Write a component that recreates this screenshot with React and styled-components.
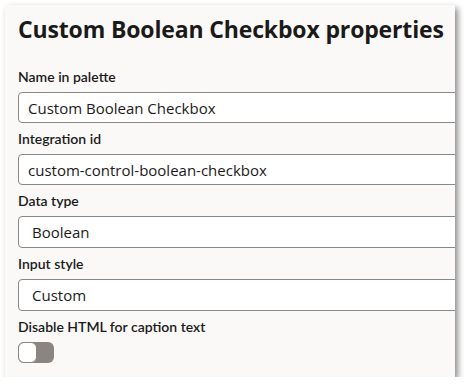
import React from "react";
import styled, { createGlobalStyle } from "styled-components";

const Global = createGlobalStyle`
  body {
    margin: 0;
    background: #ffffff;
    font-family: "Open Sans", "Noto Sans", sans-serif;
  }
`

const Panel = styled.div`
  margin: 5px 0 0 5px;
  width: 450px;
  height: 372px;
  box-sizing: border-box;
  padding: 8px 0 0 13px;
  background: #faf9f8;
  box-shadow: 3px 3px 6px rgba(0, 0, 0, 0.45);
  overflow: hidden;
`

const Title = styled.h1`
  margin: 0 0 23px;
  font-size: 23px;
  font-weight: 700;
  color: #1b1a19;
  line-height: 32px;
  letter-spacing: -0.15px;
`

const Field = styled.div`
  display: flex;
  flex-direction: column;
  margin-bottom: 7px;
`

const Label = styled.label`
  font-family: Lato, "Open Sans", sans-serif;
  font-size: 14px;
  font-weight: 600;
  color: #1b1a19;
  line-height: 18px;
  margin-bottom: 6px;
`

const Box = styled.div`
  height: ${(p) => (p.$select ? 32 : 31)}px;
  box-sizing: border-box;
  margin-right: -20px;
  border: 1px solid #8a8886;
  border-radius: 4px;
  background: #ffffff;
  display: flex;
  align-items: center;
  padding-left: ${(p) => (p.$select ? 13 : 9)}px;
  font-size: 15px;
  color: #1b1a19;
`

const Toggle = styled.div`
  width: 36px;
  height: 21px;
  box-sizing: border-box;
  border-radius: 6px;
  background: #8a8580;
  position: relative;
`

const Knob = styled.div`
  position: absolute;
  left: 0;
  top: 0;
  width: 19px;
  height: 21px;
  box-sizing: border-box;
  border: 1px solid #8a8580;
  border-radius: 6px;
  background: #ffffff;
`

const fields = [
  { label: "Name in palette", value: "Custom Boolean Checkbox" },
  { label: "Integration id", value: "custom-control-boolean-checkbox" },
  { label: "Data type", value: "Boolean", select: true },
  { label: "Input style", value: "Custom", select: true },
]

export default function App() {
  return (
    <>
      <Global />
      <Panel>
        <Title>Custom Boolean Checkbox properties</Title>
        {fields.map((f) => (
          <Field key={f.label}>
            <Label>{f.label}</Label>
            <Box $select={f.select}>{f.value}</Box>
          </Field>
        ))}
        <Field>
          <Label>Disable HTML for caption text</Label>
          <Toggle>
            <Knob />
          </Toggle>
        </Field>
      </Panel>
    </>
  );
}
